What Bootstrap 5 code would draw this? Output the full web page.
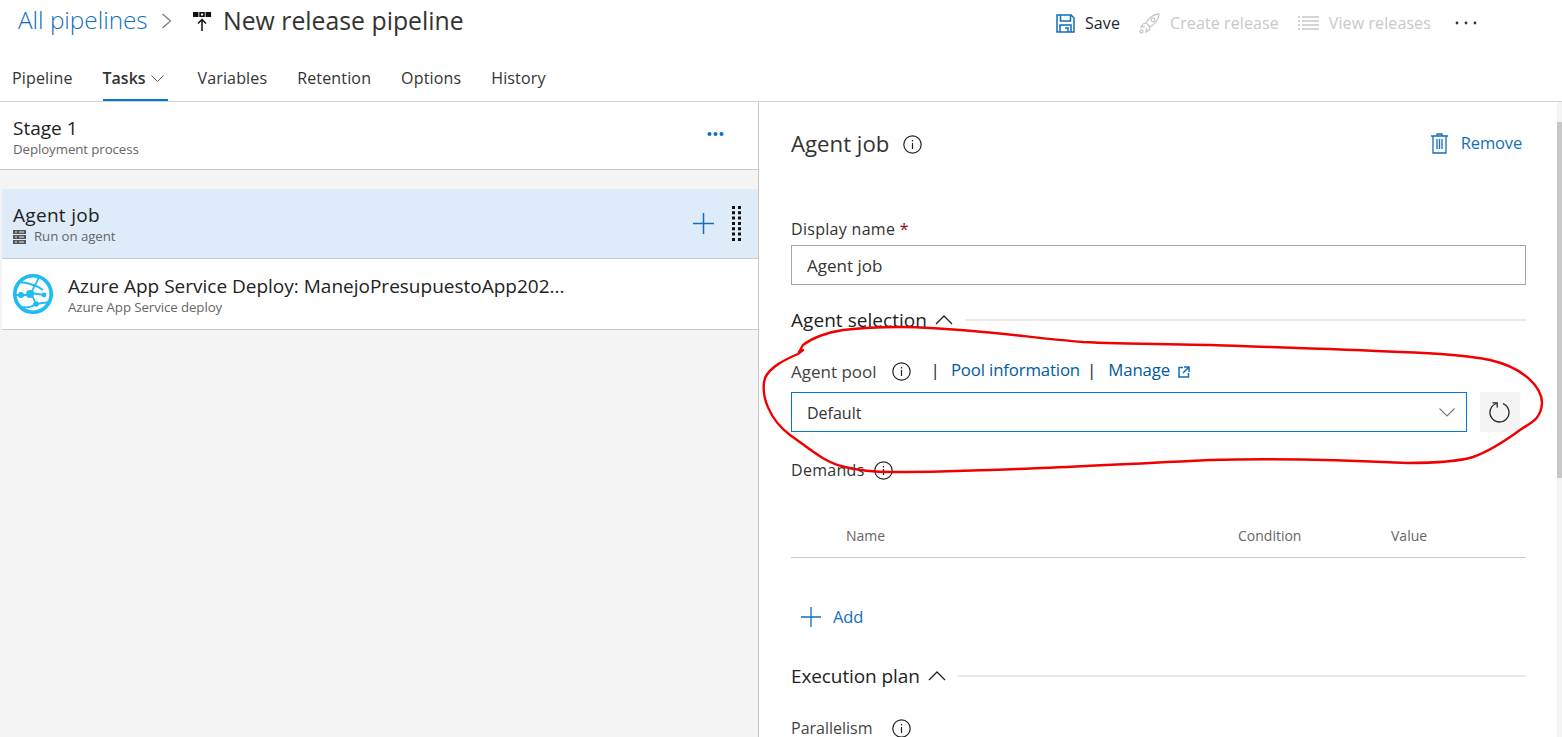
<!DOCTYPE html>
<html lang="en">
<head>
<meta charset="utf-8">
<title>New release pipeline</title>
<link href="https://cdn.jsdelivr.net/npm/bootstrap@5.3.0/dist/css/bootstrap.min.css" rel="stylesheet">
<style>
html,body{height:737px;overflow:hidden;background:#fff}
body{font-family:"Open Sans","Liberation Sans",sans-serif;font-size:16px;color:#333;position:relative}
svg{display:block;flex:none}
a{text-decoration:none}
.top-head{height:102px;border-bottom:1px solid #d4d4d4}
.title-row{height:41px;padding-left:18px}
.crumb{font-size:24.300px;color:#106ebe;font-weight:300;width:143px;white-space:nowrap}
.crumb-sep{width:31px}
.page-name{font-size:24.800px;color:#333;margin-left:11px;white-space:nowrap}
.cmds{margin-left:auto;width:506px;padding-top:5px}
.cmd{font-size:16px;letter-spacing:.1px;white-space:nowrap}
.cmd-off{color:#c8c8c8}
.gap-txt{margin-left:10px}
.gap-grp{margin-left:19px}
.gap-more{margin-left:24px}
.tabs-row{padding-left:12px;height:60px;gap:30px}
.tab-item{font-size:16px;letter-spacing:.15px;color:#333;height:60px;line-height:74px;border-bottom:2px solid transparent}
.tab-on{font-weight:600;letter-spacing:0;color:#333;border-bottom-color:#0078d4;gap:5px;width:65px}
.chev-t{margin-top:34px}
.main-row{height:635px}
.left-pane{width:759px;background:#f4f4f4;border-right:1px solid #c8c8c8;flex:none}
.stage-head{height:68px;background:#fff;border-bottom:1px solid #c8c8c8;padding:13px 34px 0 13px;margin-bottom:19px}
.more-ico{margin-top:7px}
.h-big{font-size:19px;line-height:26px;color:#222}
.h-sub{font-size:13.300px;line-height:17px;color:#666;letter-spacing:-.1px}
.job-row{margin-left:2px;height:70px;border-bottom:1px solid #c8c8c8;padding-left:11px}
.job-sel{background:#deecf9}
.job-plain{background:#fff;height:71px}
.task-name{font-size:19px;line-height:26px;color:#222;white-space:nowrap}
.job-name{letter-spacing:.3px}
.plus-ico{margin-right:18px}
.grip-ico{margin-right:17px}
.task-txt{margin-left:15px}
.right-pane{flex:1;position:relative;padding:0 36px 0 32px;min-width:0}
.detail-head{height:116px;padding-top:25px}
.detail-title{font-size:22.200px;color:#333}
.info-t{margin-left:14px;margin-top:2px}
.link-blue{color:#106ebe;font-size:16.500px;letter-spacing:-.15px}
.rm-link{gap:13px;margin-right:4px;margin-top:4px}
.fld-label{font-size:16px;color:#333;line-height:22px;letter-spacing:.3px;white-space:nowrap}
.fld-wide{font-size:17px;letter-spacing:0;color:#444}
.fld-par{letter-spacing:0;color:#444}
.req{color:#a80000}
.txt-box{height:40px;border:1px solid #a6a6a6;padding:2px 0 0 15px;font-size:17px;color:#333;margin-top:5px}
.sec-head{font-size:19px;color:#222;gap:8px;white-space:nowrap}
.sec-sel{letter-spacing:.05px}
.sec-two-txt{letter-spacing:-.1px}
.sec-line{flex:1;height:2px;background:#eaeaea;margin-left:4px}
.pool-sel{height:40px;border:1px solid #0078d4;padding:0 11px 0 15px;font-size:16px;flex:1}
.pool-txt{padding-top:2px}
.refresh-btn{width:40px;height:40px;background:#f4f4f4;margin-left:13px;margin-right:6px}
.sep-bar{color:#222;font-size:17px}
.pool-link{color:#005a9e;font-size:16.800px;letter-spacing:-.15px;white-space:nowrap}
.dem-head{height:45px;border-bottom:1px solid #c8c8c8;font-size:14px;color:#666}
.dem-name{width:447px;padding-left:55px}
.dem-cond{width:153px}
.scroll-track{position:absolute;top:0;right:0;width:5px;height:100%;background:#f4f4f4}
.scroll-thumb{margin-top:20px;height:356px;background:#c8c8c8}
.ink-mark{position:absolute;left:0;top:0;width:1562px;height:737px;pointer-events:none}
.sec-one{margin-top:24px;height:22px}
.pool-row{margin-top:20px;height:41px}
.info-a{margin-left:15px;margin-right:20px}
.bar-a{margin-right:11px;margin-top:-3px}
.bar-b{margin:-3px 12px 0 7px}
.pool-row .pool-link{margin-top:-4px}
.dem-label{margin-top:27px;height:22px;gap:9px}
.dem-head{margin-top:32px}
.add-row{margin-top:48px;margin-left:10px;height:22px}
.sec-two{margin-top:37px;height:22px}
.par-row{margin-top:30px;height:22px}
.info-b{margin-left:19px}
</style>
</head>
<body>
<header class="top-head">
  <div class="d-flex align-items-center title-row">
    <a class="crumb" href="#">All pipelines</a>
    <div class="crumb-sep"><svg width="12" height="18" viewBox="0 0 12 18" fill="none" stroke="#777" stroke-width="1.200"><path d="M1.500 2l8 7-8 7"/></svg></div>
    <svg width="20" height="22" viewBox="0 0 20 22"><path fill="#111" d="M1 2h5.500v5H1zM7.300 2h5.500v5H7.300zM13.600 2h5.500v5h-5.500z"/><path fill="#fff" d="M9 3.500h2v2H9z"/><path fill="none" stroke="#111" stroke-width="1.500" d="M10 21V10M6 13.500L10 9.500l4 4"/></svg>
    <span class="page-name">New release pipeline</span>
    <div class="d-flex align-items-center cmds">
      <svg width="19" height="19" viewBox="0 0 19 19" fill="none" stroke="#106ebe" stroke-width="1.500"><path d="M1 1h14l3 3v14H1z"/><path d="M4.500 1v6h10V1M4 18v-7h11v7M9 14h3v4"/></svg>
      <span class="cmd gap-txt text-dark">Save</span>
      <svg class="gap-grp" width="21" height="21" viewBox="0 0 21 21" fill="none" stroke="#c8c8c8" stroke-width="1.300"><path d="M20 1c-6 .5-10 3.500-13 9l4 4c5-3 8.500-7 9-13zM7 10l-3 1-2 3 4-.5M11 14l-1 3-3 2 .5-4"/><circle cx="14" cy="7" r="1.800"/><circle cx="2.500" cy="18.500" r="1.500"/></svg>
      <span class="cmd cmd-off gap-txt">Create release</span>
      <svg class="gap-grp" width="21" height="16" viewBox="0 0 21 16" stroke="#c8c8c8" stroke-width="1.300"><path d="M0 2h2M4 2h17M0 6h2M4 6h17M0 10h2M4 10h17M0 14h2M4 14h17"/></svg>
      <span class="cmd cmd-off gap-txt">View releases</span>
      <svg class="gap-more" width="22" height="4" viewBox="0 0 22 4" fill="#333"><circle cx="2" cy="2" r="1.400"/><circle cx="11" cy="2" r="1.400"/><circle cx="20" cy="2" r="1.400"/></svg>
    </div>
  </div>
  <nav class="d-flex tabs-row">
    <a class="tab-item" href="#">Pipeline</a>
    <a class="tab-item tab-on d-flex align-items-start" href="#">Tasks <svg class="chev-t" width="13" height="7" viewBox="0 0 13 7" fill="none" stroke="#555" stroke-width="1"><path d="M.5.5l6 6 6-6"/></svg></a>
    <a class="tab-item" href="#">Variables</a>
    <a class="tab-item" href="#">Retention</a>
    <a class="tab-item" href="#">Options</a>
    <a class="tab-item" href="#">History</a>
  </nav>
</header>
<div class="d-flex main-row">
  <section class="left-pane">
    <div class="stage-head d-flex justify-content-between">
      <div>
        <div class="h-big">Stage 1</div>
        <div class="h-sub">Deployment process</div>
      </div>
      <svg class="more-ico" width="17" height="24" viewBox="0 0 17 24" fill="#106ebe"><circle cx="2.500" cy="12" r="2"/><circle cx="8.500" cy="12" r="2"/><circle cx="14.500" cy="12" r="2"/></svg>
    </div>
    <div class="job-row job-sel d-flex align-items-center justify-content-between">
      <div>
        <div class="task-name job-name">Agent job</div>
        <div class="h-sub d-flex align-items-center gap-2">
          <svg width="13" height="14" viewBox="0 0 13 14" fill="#555"><path d="M0 0h13v4H0zM0 5h13v4H0zM0 10h13v4H0z"/><path stroke="#deecf9" d="M2 2h2M2 7h2M2 12h2M6 2h5M6 7h5M6 12h5"/></svg>
          <span>Run on agent</span>
        </div>
      </div>
      <div class="d-flex align-items-center">
        <svg class="plus-ico" width="21" height="21" viewBox="0 0 21 21" stroke="#106ebe" stroke-width="1.500"><path d="M10.500 0v21M0 10.500h21"/></svg>
        <svg class="grip-ico" width="9" height="35" viewBox="0 0 9 35" fill="#111"><path d="M0 0h3v3H0zM6 0h3v3H6zM0 5.300h3v3H0zM6 5.300h3v3H6zM0 10.600h3v3H0zM6 10.600h3v3H6zM0 16h3v3H0zM6 16h3v3H6zM0 21.300h3v3H0zM6 21.300h3v3H6zM0 26.600h3v3H0zM6 26.600h3v3H6zM0 32h3v3H0zM6 32h3v3H6z"/></svg>
      </div>
    </div>
    <div class="job-row job-plain d-flex align-items-center">
      <svg width="40" height="40" viewBox="0 0 40 40" fill="none" stroke="#1ebcf0"><circle cx="20" cy="20" r="18.200" stroke-width="3.600"/><path stroke-width="1.800" d="M7 8c8 1 17 3 23 8M26 3c-2 5-5 10-8 16M3 21h14M18 19l13 2M18 19l5 11M23 30l14-2M23 30c-4 3-9 4-14 3"/><circle cx="8" cy="21" r="3" fill="#1ebcf0" stroke="none"/><circle cx="17" cy="20" r="4" fill="#1ebcf0" stroke="none"/><circle cx="31" cy="21" r="2.400" fill="#1ebcf0" stroke="none"/><circle cx="23" cy="30" r="2.800" fill="#1ebcf0" stroke="none"/></svg>
      <div class="task-txt">
        <div class="task-name">Azure App Service Deploy: ManejoPresupuestoApp202...</div>
        <div class="h-sub">Azure App Service deploy</div>
      </div>
    </div>
  </section>
  <section class="right-pane">
    <div class="detail-head d-flex justify-content-between align-items-start">
      <div class="d-flex align-items-center">
        <span class="detail-title">Agent job</span>
        <svg class="info-t" width="19" height="19" viewBox="0 0 19 19" fill="none" stroke="#222" stroke-width="1.200"><circle cx="9.500" cy="9.500" r="8.700"/><path d="M9.500 8v6M9.500 5v1.400"/></svg>
      </div>
      <a class="link-blue d-flex align-items-center rm-link" href="#">
        <svg width="17" height="21" viewBox="0 0 17 21" fill="none" stroke="#106ebe" stroke-width="1.300"><path d="M0 3h17M6 3V1h5v2M2 3v17h13V3M6 6v10M8.500 6v10M11 6v10"/></svg>
        <span>Remove</span>
      </a>
    </div>
    <div class="fld-label">Display name <span class="req">*</span></div>
    <div class="txt-box d-flex align-items-center">Agent job</div>
    <div class="sec-head d-flex align-items-center sec-one">
      <span class="sec-sel">Agent selection</span>
      <svg width="18" height="10" viewBox="0 0 18 10" fill="none" stroke="#222" stroke-width="1.300"><path d="M1 9l8-8 8 8"/></svg>
      <span class="sec-line"></span>
    </div>
    <div class="d-flex align-items-center pool-row">
      <span class="fld-label fld-wide">Agent pool</span>
      <svg class="info-a" width="19" height="19" viewBox="0 0 19 19" fill="none" stroke="#222" stroke-width="1.200"><circle cx="9.500" cy="9.500" r="8.700"/><path d="M9.500 8v6M9.500 5v1.400"/></svg>
      <span class="sep-bar bar-a">|</span>
      <a class="pool-link" href="#">Pool information</a>
      <span class="sep-bar bar-b">|</span>
      <a class="pool-link" href="#">Manage</a>
      <svg class="ms-2" width="12" height="12" viewBox="0 0 12 12" fill="none" stroke="#106ebe" stroke-width="1.500"><path d="M5 1.500H1v9.500h9.500V7M6 1h5v5M11 1L5 7"/></svg>
    </div>
    <div class="d-flex">
      <div class="pool-sel d-flex align-items-center justify-content-between">
        <span class="pool-txt">Default</span>
        <svg width="16" height="9" viewBox="0 0 16 9" fill="none" stroke="#777" stroke-width="1.100"><path d="M.5.5l7.500 7.500 7.500-7.500"/></svg>
      </div>
      <div class="refresh-btn d-flex align-items-center justify-content-center">
        <svg width="22" height="22" viewBox="0 0 22 22" fill="none" stroke="#222" stroke-width="1.300"><path d="M7.500 2.500A9.500 9.500 0 1 0 14 2.700"/><path d="M3.500 1.800H8.200V6.500"/></svg>
      </div>
    </div>
    <div class="d-flex align-items-center dem-label">
      <span class="fld-label">Demands</span>
      <svg width="19" height="19" viewBox="0 0 19 19" fill="none" stroke="#222" stroke-width="1.200"><circle cx="9.500" cy="9.500" r="8.700"/><path d="M9.500 8v6M9.500 5v1.400"/></svg>
    </div>
    <div class="d-flex align-items-center dem-head">
      <span class="dem-name">Name</span><span class="dem-cond">Condition</span><span>Value</span>
    </div>
    <a class="link-blue d-flex align-items-center add-row" href="#">
      <svg width="20" height="20" viewBox="0 0 20 20" stroke="#106ebe" stroke-width="1.300"><path d="M10 0v20M0 10h20"/></svg>
      <span class="ms-2 ps-1">Add</span>
    </a>
    <div class="sec-head d-flex align-items-center sec-two">
      <span class="sec-two-txt">Execution plan</span>
      <svg width="18" height="10" viewBox="0 0 18 10" fill="none" stroke="#222" stroke-width="1.300"><path d="M1 9l8-8 8 8"/></svg>
      <span class="sec-line"></span>
    </div>
    <div class="d-flex align-items-center par-row">
      <span class="fld-label fld-par">Parallelism</span>
      <svg class="info-b" width="19" height="19" viewBox="0 0 19 19" fill="none" stroke="#222" stroke-width="1.200"><circle cx="9.500" cy="9.500" r="8.700"/><path d="M9.500 8v6M9.500 5v1.400"/></svg>
    </div>
    <div class="scroll-track"><div class="scroll-thumb"></div></div>
  </section>
</div>
<svg class="ink-mark" viewBox="0 0 1562 737" fill="none" stroke="#f00000" stroke-width="2.400" stroke-linecap="round" stroke-linejoin="round">
  <path d="M803 350L798 354C784 360 770 367 765 378C760 396 770 420 790 435C810 449 825 463 845 467C860 471 875 472 893 472C970 472 1090 466 1210 460C1280 458 1345 460 1407 463C1435 463 1460 461 1473 457C1490 451 1505 441 1520 430C1530 423 1541 420 1542 403C1542 388 1525 368 1490 360C1465 355 1430 353 1400 352C1340 349 1270 347 1210 345C1160 344 1120 344 1083 342C1045 339 1010 334 983 332C950 329 925 327 900 327C880 327 860 328 843 330C825 333 812 338 803 345L799 352"/>
</svg>
</body>
</html>
